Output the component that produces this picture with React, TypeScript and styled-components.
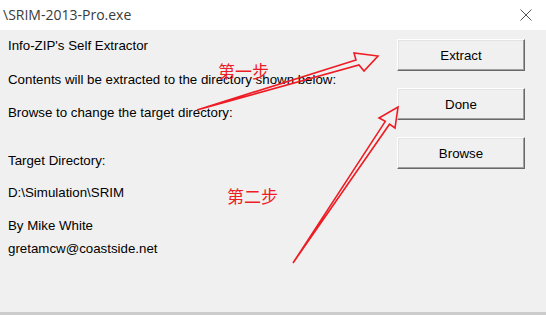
import React from 'react';
import styled, { createGlobalStyle } from 'styled-components';

const GlobalStyle = createGlobalStyle`
  html, body {
    margin: 0;
    padding: 0;
    background: #f0f0f0;
  }
  body {
    width: 546px;
    height: 315px;
    overflow: hidden;
  }
`;

// lines of the left column, with the space above each one
const LINES: { text: string; gap: number }[] = [
  { text: "Info-ZIP's Self Extractor", gap: 7 },
  { text: 'Contents will be extracted to the directory shown below:', gap: 18 },
  { text: 'Browse to change the target directory:', gap: 17 },
  { text: 'Target Directory:', gap: 32 },
  { text: 'D:\\Simulation\\SRIM', gap: 16 },
  { text: 'By Mike White', gap: 17 },
  { text: 'gretamcw@coastside.net', gap: 7 },
];

const BUTTONS = ['Extract', 'Done', 'Browse'];

const App: React.FC = () => {
  return (
    <Window>
      <GlobalStyle />
      <TitleBar>
        <Title>\SRIM-2013-Pro.exe</Title>
        <CloseButton>
          <svg width="12" height="12" viewBox="0 0 12 12">
            <path d="M0.5 0.5 L11.5 11.5 M11.5 0.5 L0.5 11.5" stroke="#555" strokeWidth="1" fill="none" />
          </svg>
        </CloseButton>
      </TitleBar>
      <Body>
        <TextColumn>
          {LINES.map((line) => (
            <Line key={line.text} gap={line.gap}>
              {line.text}
            </Line>
          ))}
        </TextColumn>
        <ButtonColumn>
          {BUTTONS.map((label) => (
            <Button key={label}>{label}</Button>
          ))}
        </ButtonColumn>
        <Annotations>
          <svg width="546" height="284" viewBox="0 31 546 284">
            <polygon
              points="197,111 356,61 354,54 378,57 364,72 359,66"
              fill="none"
              stroke="#ee1c24"
              strokeWidth="1.6"
              strokeLinejoin="miter"
            />
            <polygon
              points="293,264 385.3,122.4 379,119 398,108 395,129 389.5,125.2"
              fill="none"
              stroke="#ee1c24"
              strokeWidth="1.6"
              strokeLinejoin="miter"
            />
          </svg>
          <StepLabel x={218} y={31}>第一步</StepLabel>
          <StepLabel x={227} y={156}>第二步</StepLabel>
        </Annotations>
      </Body>
      <BottomEdge />
    </Window>
  );
};

const Window = styled.div`
  width: 546px;
  height: 315px;
  display: flex;
  flex-direction: column;
  background: #f0f0f0;
  overflow: hidden;
`;

const TitleBar = styled.div`
  height: 30px;
  flex-shrink: 0;
  background: #ffffff;
  display: flex;
  align-items: center;
  justify-content: space-between;
  padding: 0 14px 0 3px;
`;

const Title = styled.div`
  font-family: 'Open Sans', 'Noto Sans', sans-serif;
  font-size: 14px;
  color: #3a3a3a;
  margin-top: -2px;
`;

const CloseButton = styled.div`
  width: 12px;
  height: 12px;
  display: flex;
  margin-top: -1px;
`;

const Body = styled.div`
  position: relative;
  flex: 1;
  display: flex;
  justify-content: space-between;
  padding: 0 21px 0 8px;
  background: #f0f0f0;
`;

const TextColumn = styled.div`
  display: flex;
  flex-direction: column;
  padding-top: 1px;
`;

const Line = styled.div<{ gap: number }>`
  margin-top: ${(p) => p.gap}px;
  height: 16px;
  line-height: 16px;
  font-family: 'Liberation Sans', Arial, sans-serif;
  font-size: 13.3px;
  color: #000;
  white-space: nowrap;
`;

const ButtonColumn = styled.div`
  display: flex;
  flex-direction: column;
  gap: 17px;
  padding-top: 9px;
`;

const Button = styled.div`
  box-sizing: border-box;
  width: 128px;
  height: 32px;
  display: flex;
  align-items: center;
  justify-content: center;
  background: #f0f0f0;
  font-family: 'Liberation Sans', Arial, sans-serif;
  font-size: 13.3px;
  color: #000;
  border-top: 1px solid #ffffff;
  border-left: 1px solid #ffffff;
  border-right: 1px solid #696969;
  border-bottom: 1px solid #696969;
  box-shadow: inset -1px -1px 0 #a0a0a0, inset 1px 1px 0 #e3e3e3;
`;

const Annotations = styled.div`
  position: absolute;
  inset: 0;
  pointer-events: none;

  svg {
    position: absolute;
    left: 0;
    top: 0;
  }
`;

const StepLabel = styled.div<{ x: number; y: number }>`
  position: absolute;
  left: ${(p) => p.x}px;
  top: ${(p) => p.y}px;
  font-family: 'Noto Sans CJK SC', sans-serif;
  font-size: 17px;
  line-height: 20px;
  color: #ee1c24;
  white-space: nowrap;
`;

const BottomEdge = styled.div`
  height: 3px;
  flex-shrink: 0;
  background: #cccccc;
`;

export default App;
